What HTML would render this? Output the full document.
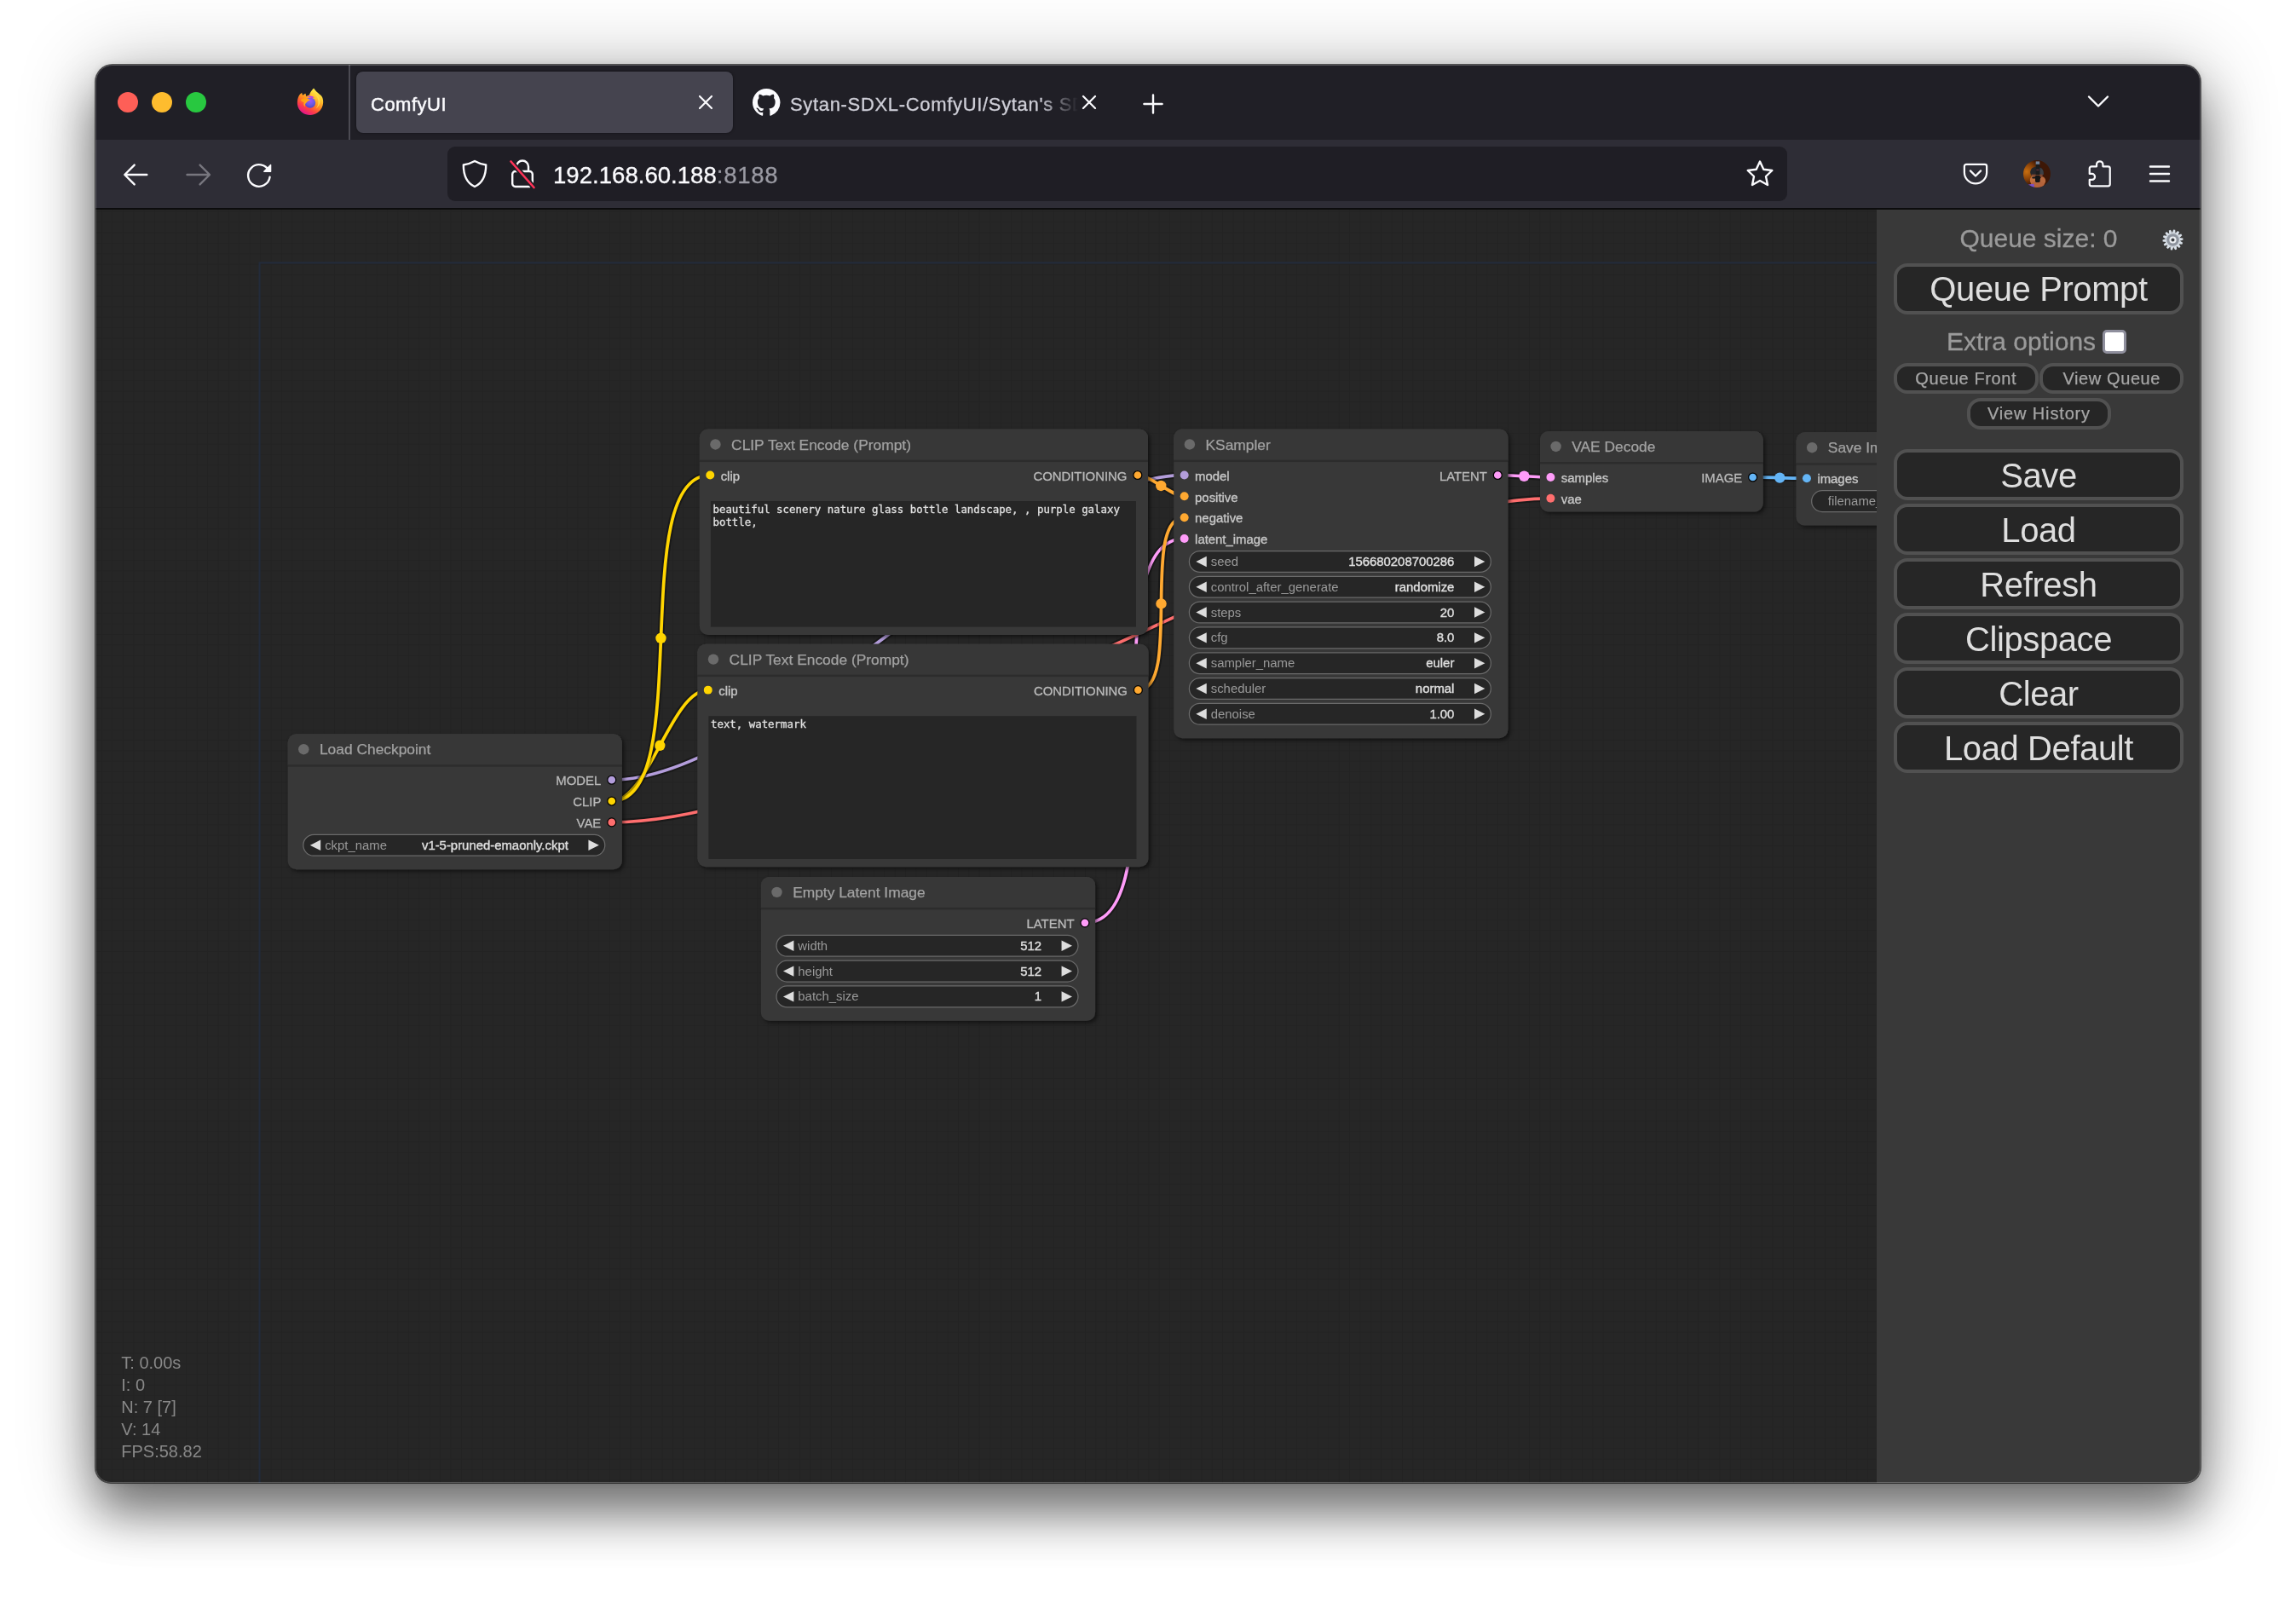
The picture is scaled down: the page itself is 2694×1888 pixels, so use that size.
<!DOCTYPE html>
<html><head><meta charset="utf-8"><title>ComfyUI</title>
<style>
html,body{margin:0;padding:0;overflow:hidden;background:#fff}
body{width:2694px;height:1888px;background:#fff;position:relative;overflow:hidden;font-family:"Liberation Sans",Arial,sans-serif}
#win{position:absolute;left:112px;top:76px;width:2470px;height:1664px;border-radius:20px 20px 18px 18px;overflow:hidden;background:#262626}
#shadow{position:absolute;left:112px;top:76px;width:2470px;height:1664px;border-radius:20px 20px 18px 18px;box-shadow:0 0 0 1px rgba(0,0,0,.6),0 36px 56px rgba(0,0,0,.46),0 6px 90px rgba(0,0,0,.3),0 0 8px rgba(0,0,0,.12)}
#rim{position:absolute;left:0;top:0;width:2470px;height:1664px;box-sizing:border-box;border:1.6px solid rgba(255,255,255,.24);border-radius:20px 20px 18px 18px;pointer-events:none}
#tabs{position:absolute;left:0;top:0;width:100%;height:89px;background:#201f26}
#nav{position:absolute;left:0;top:89px;width:100%;height:80px;background:#2e2d36}
#navline{position:absolute;left:0;top:169px;width:100%;height:2px;background:#0c0c0d}
.abs{position:absolute}
.t{position:absolute;white-space:nowrap;will-change:transform}
.tl{position:absolute;top:33px;width:24px;height:24px;border-radius:50%}
#content{position:absolute;left:0;top:171px;width:2090px;height:1494px;overflow:hidden;background-color:#262626;
 background-image:linear-gradient(to right,#232323 0,#232323 1px,transparent 1px),linear-gradient(to bottom,#232323 0,#232323 1px,transparent 1px);
 background-size:12.42px 12.42px;background-position:7.1px 1.7px}
#side{position:absolute;left:2090px;top:171px;width:380px;height:1494px;background:#393939;color:#999}
.btn{position:absolute;box-sizing:border-box;border:4px solid #515151;border-radius:16px;background:#262626;left:20px;width:340px;height:60px}
.btn span{position:absolute;left:0;top:3.3px;width:100%;text-align:center;color:#dedede;font-size:40px;line-height:46px;letter-spacing:-.4px;white-space:nowrap;will-change:transform}
.sbtn{position:absolute;box-sizing:border-box;border:4px solid #515151;border-radius:16px;background:#262626;height:36.5px}
.sbtn span{position:absolute;left:0;top:2.2px;width:100%;text-align:center;color:#a6a6a6;font-size:20px;line-height:24px;letter-spacing:.6px;white-space:nowrap;will-change:transform;-webkit-text-stroke:.25px #a6a6a6}
svg text{font-family:"Liberation Sans",Arial,sans-serif}
svg text.mono{font-family:"DejaVu Sans Mono","Liberation Mono",monospace}
</style></head><body>
<div id="shadow"></div>
<div id="win">
<div class="abs" style="left:0;top:-1px;width:2470px;height:1665px">
 <div id="tabs">
  <div class="tl" style="left:26px;background:#fe5f57"></div>
  <div class="tl" style="left:66px;background:#febc2e"></div>
  <div class="tl" style="left:106px;background:#28c840"></div>
  <!-- firefox logo -->
  <svg class="abs" style="left:228px;top:21px" width="50" height="50" viewBox="0 0 50 50">
   <defs>
    <linearGradient id="ff1" x1=".82" y1=".08" x2=".3" y2=".98"><stop offset="0" stop-color="#fff44f"/><stop offset=".28" stop-color="#ffc42e"/><stop offset=".52" stop-color="#ff8a1f"/><stop offset=".76" stop-color="#ff3f45"/><stop offset="1" stop-color="#e3158c"/></linearGradient>
    <radialGradient id="ff2" cx=".5" cy=".3" r=".75"><stop offset="0" stop-color="#9f52ff"/><stop offset=".55" stop-color="#6a5ae0"/><stop offset="1" stop-color="#4b3fc0"/></radialGradient>
    <linearGradient id="ff3" x1="0" y1="0" x2="1" y2="1"><stop offset="0" stop-color="#ff9a0a"/><stop offset="1" stop-color="#ffb62a"/></linearGradient>
   </defs>
   <path d="M28.1 7.6C30 10.6 32.5 12.6 35 14.7C37 16.2 38.3 17.6 38.6 19.6C39.6 22.5 39.4 27 37.6 30.6C35 35.6 30 39 24 39C17 39 11.5 35 9.5 29C8.4 25 8.8 21 10 18C11 15.5 12.5 13.8 14.3 12.7C14.3 14 14.8 15 15.5 15.8C16.3 14.8 17.5 14.1 18.6 13.8C18.6 15 19 16.2 19.6 17.2C20.6 16.5 22 15.8 23 15.6C23.6 12.6 25.5 10.4 28.1 7.6Z" fill="url(#ff1)"/>
   <path d="M28.3 14C31.5 16 33.6 19.5 33.6 23.8C33.6 27 32.5 29.6 30.6 31.4C33.8 29.4 35.6 26 35.4 22.4C35.2 19 32.6 15.6 28.3 14Z" fill="#ffe14d" opacity=".8"/>
   <circle cx="24" cy="24.6" r="6.2" fill="url(#ff2)"/>
   <path d="M20 17.4C22.5 15.8 26.5 16.2 29 18.6C27.6 18.3 26.6 18.5 26 19.2C24.4 17.8 22 17.3 20 17.4Z" fill="#b536f0"/>
   <path d="M12.8 21.2C15 19.6 18 19 20 19.6C21.5 20 22.8 20.8 24 21.4C22 22 20.2 23.2 19.4 24.6C18 26 17.4 27.6 17.8 29.4C16 27.6 16.2 25.4 16.8 24C15 23.6 13.6 22.6 12.8 21.2Z" fill="url(#ff3)"/>
  </svg>
  <div class="abs" style="left:297px;top:1px;width:1.5px;height:88px;background:#4b4a52"></div>
  <div class="abs" style="left:306px;top:9px;width:442px;height:72px;border-radius:8px;background:#45444f;box-shadow:0 0 3px rgba(0,0,0,.5)"></div>
  <div class="t" style="left:322.5px;top:35px;font-size:22px;line-height:26px;color:#fbfbfe;letter-spacing:.5px;-webkit-text-stroke:.45px #fbfbfe">ComfyUI</div>
  <svg class="abs" style="left:706px;top:35px" width="20" height="20" viewBox="0 0 20 20"><path d="M3 3L17 17M17 3L3 17" stroke="#fbfbfe" stroke-width="2.2" stroke-linecap="round"/></svg>
  <svg class="abs" style="left:771.4px;top:28.6px" width="32.5" height="32.5" viewBox="0 0 16 16"><path d="M8 0C3.58 0 0 3.58 0 8c0 3.54 2.29 6.53 5.47 7.59.4.07.55-.17.55-.38 0-.19-.01-.82-.01-1.49-2.01.37-2.53-.49-2.69-.94-.09-.23-.48-.94-.82-1.13-.28-.15-.68-.52-.01-.53.63-.01 1.08.58 1.23.82.72 1.21 1.87.87 2.33.66.07-.52.28-.87.51-1.07-1.78-.2-3.64-.89-3.64-3.95 0-.87.31-1.59.82-2.15-.08-.2-.36-1.02.08-2.12 0 0 .67-.21 2.2.82.64-.18 1.32-.27 2-.27.68 0 1.36.09 2 .27 1.53-1.04 2.2-.82 2.2-.82.44 1.1.16 1.92.08 2.12.51.56.82 1.27.82 2.15 0 3.07-1.87 3.75-3.65 3.95.29.25.54.73.54 1.48 0 1.07-.01 1.93-.01 2.2 0 .21.15.46.55.38A8.013 8.013 0 0016 8c0-4.42-3.58-8-8-8z" fill="#fbfbfe"/></svg>
  <div class="t" style="left:815px;top:35px;width:340px;height:28px;overflow:hidden;font-size:22px;line-height:26px;color:#cfcfd8;letter-spacing:.67px;-webkit-text-stroke:.3px #cfcfd8;-webkit-mask-image:linear-gradient(to right,#000 0,#000 292px,transparent 338px);mask-image:linear-gradient(to right,#000 0,#000 292px,transparent 338px)">Sytan-SDXL-ComfyUI/Sytan's SDXL Workflow</div>
  <svg class="abs" style="left:1155.8px;top:35px" width="20" height="20" viewBox="0 0 20 20"><path d="M3 3L17 17M17 3L3 17" stroke="#fbfbfe" stroke-width="2.2" stroke-linecap="round"/></svg>
  <svg class="abs" style="left:1228px;top:34px" width="26" height="26" viewBox="0 0 26 26"><path d="M13 2.4V23.6M2.4 13H23.6" stroke="#fbfbfe" stroke-width="2.4" stroke-linecap="round"/></svg>
  <svg class="abs" style="left:2336px;top:35px" width="28" height="18" viewBox="0 0 28 18"><path d="M3 3.5L14 14.5L25 3.5" fill="none" stroke="#fbfbfe" stroke-width="2.4" stroke-linecap="round" stroke-linejoin="round"/></svg>
 </div>
 <div id="nav">
  <svg class="abs" style="left:30px;top:25px" width="36" height="32" viewBox="0 0 36 32"><path d="M30.3 16H5M15.7 4.6L4.3 16L15.7 27.4" fill="none" stroke="#fbfbfe" stroke-width="2.4" stroke-linecap="round" stroke-linejoin="round"/></svg>
  <svg class="abs" style="left:102px;top:25px" width="36" height="32" viewBox="0 0 36 32"><path d="M5.5 16H31M20.6 4.6L32 16L20.6 27.4" fill="none" stroke="#77767e" stroke-width="2.4" stroke-linecap="round" stroke-linejoin="round"/></svg>
  <svg class="abs" style="left:174px;top:23px" width="36" height="36" viewBox="0 0 36 36"><path d="M29.5 13.5A12.8 12.8 0 1 0 30.6 20.7" fill="none" stroke="#fbfbfe" stroke-width="2.4" stroke-linecap="round"/><path d="M31.6 6.4V14.2H23.8Z" fill="#fbfbfe" stroke="#fbfbfe" stroke-width="1.4" stroke-linejoin="round"/></svg>
  <div class="abs" style="left:413px;top:8px;width:1572px;height:63.5px;border-radius:9px;background:#1f1e25"></div>
  <svg class="abs" style="left:428px;top:22px" width="34" height="36" viewBox="0 0 34 36"><path d="M17 3C12.5 5.5 8 7 3.8 7.5 3.8 19 7 28.5 17 33 27 28.5 30.2 19 30.2 7.5 26 7 21.5 5.5 17 3Z" fill="none" stroke="#fbfbfe" stroke-width="2.4" stroke-linejoin="round"/></svg>
  <svg class="abs" style="left:484px;top:20px" width="34" height="40" viewBox="0 0 34 40"><path d="M10 17V11.5A7 7 0 0 1 24 11.5V17" fill="none" stroke="#fbfbfe" stroke-width="2.4"/><rect x="5.2" y="17" width="23.6" height="18" rx="3.5" fill="none" stroke="#fbfbfe" stroke-width="2.4"/><path d="M3.5 5.5L30.5 36" stroke="#1f1e25" stroke-width="6"/><path d="M3.5 5.5L30.5 36" stroke="#ff3358" stroke-width="2.6" stroke-linecap="round"/></svg>
  <div class="t" style="left:537px;top:25.5px;font-size:27.6px;line-height:32px;color:#fbfbfe;-webkit-text-stroke:.3px #fbfbfe">192.168.60.188<span style="color:#9a9aa3;letter-spacing:.7px;-webkit-text-stroke:.3px #9a9aa3">:8188</span></div>
  <svg class="abs" style="left:1935px;top:22px" width="36" height="36" viewBox="0 0 36 36"><path d="M18 3.5L22.3 12.8L32.3 14L25 21L27 31L18 26L9 31L11 21L3.7 14L13.7 12.8Z" fill="none" stroke="#fbfbfe" stroke-width="2.4" stroke-linejoin="round"/></svg>
  <svg class="abs" style="left:2191px;top:26.5px" width="30" height="26.25" viewBox="0 0 32 28"><path d="M4.5 2H27.5A2.5 2.5 0 0 1 30 4.5V12A14 14 0 0 1 2 12V4.5A2.5 2.5 0 0 1 4.5 2Z" fill="none" stroke="#fbfbfe" stroke-width="2.4"/><path d="M9.5 10L16 16.5L22.5 10" fill="none" stroke="#fbfbfe" stroke-width="2.4" stroke-linecap="round" stroke-linejoin="round"/></svg>
  <!-- avatar -->
  <svg class="abs" style="left:2262px;top:24px" width="32" height="32" viewBox="0 0 32 32">
   <defs><clipPath id="avc"><circle cx="16" cy="16" r="16"/></clipPath><filter id="avb"><feGaussianBlur stdDeviation=".45"/></filter>
   <radialGradient id="avg" cx=".12" cy=".42" r=".5"><stop offset="0" stop-color="#c96f10"/><stop offset=".55" stop-color="#8a4208"/><stop offset="1" stop-color="#3d1706"/></radialGradient></defs>
   <g clip-path="url(#avc)"><rect width="32" height="32" fill="url(#avg)"/>
   <g filter="url(#avb)">
    <ellipse cx="16" cy="14" rx="7.9" ry="6.6" fill="#25262a"/>
    <path d="M19.5 9C22.5 9.5 24 12.5 23.8 17L19.5 17Z" fill="#3d3f45"/>
    <rect x="9.6" y="16.6" width="13" height="3.4" fill="#7d4630"/>
    <rect x="14.7" y="1.4" width="4.5" height="4" fill="#71849c"/>
    <rect x="14.7" y="4.8" width="4.5" height="12.4" fill="#1a1b1f"/>
    <rect x="15.3" y="10.6" width="3.3" height="1.6" fill="#5a3038"/>
    <ellipse cx="11.3" cy="23.4" rx="3.4" ry="4.9" fill="#c0703f"/>
    <ellipse cx="22.6" cy="24.2" rx="3.6" ry="4.6" fill="#b8683c"/>
    <ellipse cx="16.6" cy="28.6" rx="8" ry="3.8" fill="#b4633a"/>
    <rect x="10.3" y="19.6" width="10" height="2" rx=".8" fill="#15161a"/>
    <rect x="14" y="18.1" width="5.7" height="7.9" rx="1.4" fill="#131418"/>
    <path d="M6 28.4L12.6 27.8L13 32L5 32Z" fill="#7a50c8"/>
   </g></g>
  </svg>
  <svg class="abs" style="left:2336.5px;top:22.5px" width="29.5" height="33.2" viewBox="0 0 32 36"><path d="M12 9V6.5A4 4 0 0 1 20 6.5V9H26.5A2.5 2.5 0 0 1 29 11.5V31.5A2.5 2.5 0 0 1 26.5 34H5.5A2.5 2.5 0 0 1 3 31.5V26H6A3.8 3.8 0 0 0 6 18.4H3V11.5A2.5 2.5 0 0 1 5.5 9Z" fill="none" stroke="#fbfbfe" stroke-width="2.4" stroke-linejoin="round"/></svg>
  <svg class="abs" style="left:2408px;top:29px" width="28" height="22" viewBox="0 0 28 22"><path d="M3 2.5H25M3 11H25M3 19.5H25" stroke="#fbfbfe" stroke-width="2.4" stroke-linecap="round"/></svg>
 </div>
 <div id="navline"></div>
 <div id="content">
  <svg class="abs" style="left:0;top:0;will-change:transform" width="2090" height="1494" viewBox="112 246 2090 1494">
   <defs><filter id="sh" x="-10%" y="-10%" width="120%" height="125%"><feDropShadow dx="2.5" dy="2.5" stdDeviation="2" flood-color="#000" flood-opacity=".5"/></filter></defs>
<path d="M304.6 1800V308.3H2300" fill="none" stroke="#232b3a" stroke-width="2.2"/>
<path d="M717.74 915.2C908.04 915.2 1199.37 557.5 1389.67 557.5" fill="none" stroke="rgba(0,0,0,0.32)" stroke-width="7.95"/>
<path d="M717.74 915.2C908.04 915.2 1199.37 557.5 1389.67 557.5" fill="none" stroke="#B39DDB" stroke-width="3.73"/>
<circle cx="1053.7" cy="736.35" r="6.21" fill="#B39DDB"/>
<path d="M1272.92 1082.87C1389.35 1082.87 1273.24 632.02 1389.67 632.02" fill="none" stroke="rgba(0,0,0,0.32)" stroke-width="7.95"/>
<path d="M1272.92 1082.87C1389.35 1082.87 1273.24 632.02 1389.67 632.02" fill="none" stroke="#FF9CF9" stroke-width="3.73"/>
<circle cx="1331.29" cy="857.44" r="6.21" fill="#FF9CF9"/>
<path d="M717.74 964.88C1009.09 964.88 1528.06 584.82 1819.4 584.82" fill="none" stroke="rgba(0,0,0,0.32)" stroke-width="7.95"/>
<path d="M717.74 964.88C1009.09 964.88 1528.06 584.82 1819.4 584.82" fill="none" stroke="#FF6E6E" stroke-width="3.73"/>
<circle cx="1268.57" cy="774.85" r="6.21" fill="#FF6E6E"/>
<path d="M717.74 940.04C760.89 940.04 787.62 809.63 830.77 809.63" fill="none" stroke="rgba(0,0,0,0.32)" stroke-width="7.95"/>
<path d="M717.74 940.04C760.89 940.04 787.62 809.63 830.77 809.63" fill="none" stroke="#FFD500" stroke-width="3.73"/>
<circle cx="774.25" cy="874.83" r="6.21" fill="#FFD500"/>
<path d="M717.74 940.04C817.64 940.04 733.35 557.5 833.25 557.5" fill="none" stroke="rgba(0,0,0,0.32)" stroke-width="7.95"/>
<path d="M717.74 940.04C817.64 940.04 733.35 557.5 833.25 557.5" fill="none" stroke="#FFD500" stroke-width="3.73"/>
<circle cx="775.5" cy="748.77" r="6.21" fill="#FFD500"/>
<path d="M1334.83 557.5C1349.88 557.5 1374.62 582.34 1389.67 582.34" fill="none" stroke="rgba(0,0,0,0.32)" stroke-width="7.95"/>
<path d="M1334.83 557.5C1349.88 557.5 1374.62 582.34 1389.67 582.34" fill="none" stroke="#FFA931" stroke-width="3.73"/>
<circle cx="1362.25" cy="569.92" r="6.21" fill="#FFA931"/>
<path d="M1335.36 809.63C1387.76 809.63 1337.27 607.18 1389.67 607.18" fill="none" stroke="rgba(0,0,0,0.32)" stroke-width="7.95"/>
<path d="M1335.36 809.63C1387.76 809.63 1337.27 607.18 1389.67 607.18" fill="none" stroke="#FFA931" stroke-width="3.73"/>
<circle cx="1362.51" cy="708.4" r="6.21" fill="#FFA931"/>
<path d="M1757.3 557.5C1772.84 557.5 1803.86 559.98 1819.4 559.98" fill="none" stroke="rgba(0,0,0,0.32)" stroke-width="7.95"/>
<path d="M1757.3 557.5C1772.84 557.5 1803.86 559.98 1819.4 559.98" fill="none" stroke="#FF9CF9" stroke-width="3.73"/>
<circle cx="1788.35" cy="558.74" r="6.21" fill="#FF9CF9"/>
<path d="M2056.62 559.98C2072.46 559.98 2104.12 561.23 2119.96 561.23" fill="none" stroke="rgba(0,0,0,0.32)" stroke-width="7.95"/>
<path d="M2056.62 559.98C2072.46 559.98 2104.12 561.23 2119.96 561.23" fill="none" stroke="#64B5F6" stroke-width="3.73"/>
<circle cx="2088.29" cy="560.6" r="6.21" fill="#64B5F6"/>
<g><path d="M828.28 755.68H1337.61A9.94 9.94 0 0 1 1347.54 765.61V1007.31A9.94 9.94 0 0 1 1337.61 1017.25H828.28A9.94 9.94 0 0 1 818.35 1007.31V765.61A9.94 9.94 0 0 1 828.28 755.68Z" fill="#393939" filter="url(#sh)"/><path d="M828.28 755.68H1337.61A9.94 9.94 0 0 1 1347.54 765.61V792.94H818.35V765.61A9.94 9.94 0 0 1 828.28 755.68Z" fill="#373737"/><rect x="818.35" y="791.7" width="529.2" height="2.48" fill="rgba(0,0,0,0.2)"/><circle cx="836.98" cy="773.61" r="6.21" fill="#6a6a6a"/><text x="855.61" y="779.72" font-size="17.39" fill="#a2a2a2" stroke="#a2a2a2" stroke-width=".25">CLIP Text Encode (Prompt)</text><circle cx="830.77" cy="809.63" r="4.97" fill="#FFD500"/><text x="843.19" y="815.84" font-size="14.9" fill="#c6c6c6" stroke="#c6c6c6" stroke-width=".35">clip</text><circle cx="1335.36" cy="809.63" r="4.97" fill="#FFA931" stroke="#000" stroke-width="1.24"/><text x="1322.94" y="815.84" font-size="14.9" fill="#bababa" stroke="#bababa" stroke-width=".3" text-anchor="end">CONDITIONING</text><rect x="831.39" y="840.13" width="502.11" height="167.8" fill="#262626"/><text x="833.99" y="853.73" font-size="12.4" fill="#e0e0e0" stroke="#e0e0e0" stroke-width=".3" class="mono" xml:space="preserve">text, watermark</text></g>
<g><path d="M830.77 503.55H1337.07A9.94 9.94 0 0 1 1347 513.49V734.95A9.94 9.94 0 0 1 1337.07 744.89H830.77A9.94 9.94 0 0 1 820.83 734.95V513.49A9.94 9.94 0 0 1 830.77 503.55Z" fill="#393939" filter="url(#sh)"/><path d="M830.77 503.55H1337.07A9.94 9.94 0 0 1 1347 513.49V540.81H820.83V513.49A9.94 9.94 0 0 1 830.77 503.55Z" fill="#373737"/><rect x="820.83" y="539.57" width="526.17" height="2.48" fill="rgba(0,0,0,0.2)"/><circle cx="839.46" cy="521.48" r="6.21" fill="#6a6a6a"/><text x="858.09" y="527.59" font-size="17.39" fill="#a2a2a2" stroke="#a2a2a2" stroke-width=".25">CLIP Text Encode (Prompt)</text><circle cx="833.25" cy="557.5" r="4.97" fill="#FFD500"/><text x="845.67" y="563.71" font-size="14.9" fill="#c6c6c6" stroke="#c6c6c6" stroke-width=".35">clip</text><circle cx="1334.83" cy="557.5" r="4.97" fill="#FFA931" stroke="#000" stroke-width="1.24"/><text x="1322.41" y="563.71" font-size="14.9" fill="#bababa" stroke="#bababa" stroke-width=".3" text-anchor="end">CONDITIONING</text><rect x="833.87" y="588.01" width="499.09" height="147.57" fill="#262626"/><text x="836.47" y="601.61" font-size="12.4" fill="#e0e0e0" stroke="#e0e0e0" stroke-width=".3" class="mono" xml:space="preserve">beautiful scenery nature glass bottle landscape, , purple galaxy</text><text x="836.47" y="616.81" font-size="12.4" fill="#e0e0e0" stroke="#e0e0e0" stroke-width=".3" class="mono" xml:space="preserve">bottle,</text></g>
<g><path d="M902.8 1028.92H1275.16A9.94 9.94 0 0 1 1285.1 1038.85V1187.89A9.94 9.94 0 0 1 1275.16 1197.83H902.8A9.94 9.94 0 0 1 892.87 1187.89V1038.85A9.94 9.94 0 0 1 902.8 1028.92Z" fill="#393939" filter="url(#sh)"/><path d="M902.8 1028.92H1275.16A9.94 9.94 0 0 1 1285.1 1038.85V1066.18H892.87V1038.85A9.94 9.94 0 0 1 902.8 1028.92Z" fill="#373737"/><rect x="892.87" y="1064.94" width="392.23" height="2.48" fill="rgba(0,0,0,0.2)"/><circle cx="911.5" cy="1046.85" r="6.21" fill="#6a6a6a"/><text x="930.13" y="1052.96" font-size="17.39" fill="#a2a2a2" stroke="#a2a2a2" stroke-width=".25">Empty Latent Image</text><circle cx="1272.92" cy="1082.87" r="4.97" fill="#FF9CF9" stroke="#000" stroke-width="1.24"/><text x="1260.5" y="1089.08" font-size="14.9" fill="#bababa" stroke="#bababa" stroke-width=".3" text-anchor="end">LATENT</text><rect x="911" y="1097.37" width="353.97" height="24.84" rx="12.42" fill="#262626" stroke="#6a6a6a" stroke-width="1.24"/><path d="M931.37 1103.58L918.95 1109.79L931.37 1116Z" fill="#ddd"/><path d="M1245.59 1103.58L1258.01 1109.79L1245.59 1116Z" fill="#ddd"/><text x="936.34" y="1114.76" font-size="14.9" fill="#999">width</text><text x="1222" y="1114.76" font-size="14.9" fill="#e0e0e0" stroke="#e0e0e0" stroke-width=".35" text-anchor="end">512</text><rect x="911" y="1127.18" width="353.97" height="24.84" rx="12.42" fill="#262626" stroke="#6a6a6a" stroke-width="1.24"/><path d="M931.37 1133.39L918.95 1139.6L931.37 1145.81Z" fill="#ddd"/><path d="M1245.59 1133.39L1258.01 1139.6L1245.59 1145.81Z" fill="#ddd"/><text x="936.34" y="1144.57" font-size="14.9" fill="#999">height</text><text x="1222" y="1144.57" font-size="14.9" fill="#e0e0e0" stroke="#e0e0e0" stroke-width=".35" text-anchor="end">512</text><rect x="911" y="1156.99" width="353.97" height="24.84" rx="12.42" fill="#262626" stroke="#6a6a6a" stroke-width="1.24"/><path d="M931.37 1163.2L918.95 1169.41L931.37 1175.62Z" fill="#ddd"/><path d="M1245.59 1163.2L1258.01 1169.41L1245.59 1175.62Z" fill="#ddd"/><text x="936.34" y="1174.37" font-size="14.9" fill="#999">batch_size</text><text x="1222" y="1174.37" font-size="14.9" fill="#e0e0e0" stroke="#e0e0e0" stroke-width=".35" text-anchor="end">1</text></g>
<g><path d="M1387.18 503.55H1759.54A9.94 9.94 0 0 1 1769.48 513.49V856.28A9.94 9.94 0 0 1 1759.54 866.22H1387.18A9.94 9.94 0 0 1 1377.25 856.28V513.49A9.94 9.94 0 0 1 1387.18 503.55Z" fill="#393939" filter="url(#sh)"/><path d="M1387.18 503.55H1759.54A9.94 9.94 0 0 1 1769.48 513.49V540.81H1377.25V513.49A9.94 9.94 0 0 1 1387.18 503.55Z" fill="#373737"/><rect x="1377.25" y="539.57" width="392.23" height="2.48" fill="rgba(0,0,0,0.2)"/><circle cx="1395.88" cy="521.48" r="6.21" fill="#6a6a6a"/><text x="1414.51" y="527.59" font-size="17.39" fill="#a2a2a2" stroke="#a2a2a2" stroke-width=".25">KSampler</text><circle cx="1389.67" cy="557.5" r="4.97" fill="#B39DDB"/><text x="1402.09" y="563.71" font-size="14.9" fill="#c6c6c6" stroke="#c6c6c6" stroke-width=".35">model</text><circle cx="1389.67" cy="582.34" r="4.97" fill="#FFA931"/><text x="1402.09" y="588.55" font-size="14.9" fill="#c6c6c6" stroke="#c6c6c6" stroke-width=".35">positive</text><circle cx="1389.67" cy="607.18" r="4.97" fill="#FFA931"/><text x="1402.09" y="613.39" font-size="14.9" fill="#c6c6c6" stroke="#c6c6c6" stroke-width=".35">negative</text><circle cx="1389.67" cy="632.02" r="4.97" fill="#FF9CF9"/><text x="1402.09" y="638.23" font-size="14.9" fill="#c6c6c6" stroke="#c6c6c6" stroke-width=".35">latent_image</text><circle cx="1757.3" cy="557.5" r="4.97" fill="#FF9CF9" stroke="#000" stroke-width="1.24"/><text x="1744.88" y="563.71" font-size="14.9" fill="#bababa" stroke="#bababa" stroke-width=".3" text-anchor="end">LATENT</text><rect x="1395.38" y="646.52" width="353.97" height="24.84" rx="12.42" fill="#262626" stroke="#6a6a6a" stroke-width="1.24"/><path d="M1415.75 652.73L1403.33 658.94L1415.75 665.15Z" fill="#ddd"/><path d="M1729.97 652.73L1742.39 658.94L1729.97 665.15Z" fill="#ddd"/><text x="1420.72" y="663.91" font-size="14.9" fill="#999">seed</text><text x="1706.38" y="663.91" font-size="14.9" fill="#e0e0e0" stroke="#e0e0e0" stroke-width=".35" text-anchor="end">156680208700286</text><rect x="1395.38" y="676.33" width="353.97" height="24.84" rx="12.42" fill="#262626" stroke="#6a6a6a" stroke-width="1.24"/><path d="M1415.75 682.54L1403.33 688.75L1415.75 694.96Z" fill="#ddd"/><path d="M1729.97 682.54L1742.39 688.75L1729.97 694.96Z" fill="#ddd"/><text x="1420.72" y="693.72" font-size="14.9" fill="#999">control_after_generate</text><text x="1706.38" y="693.72" font-size="14.9" fill="#e0e0e0" stroke="#e0e0e0" stroke-width=".35" text-anchor="end">randomize</text><rect x="1395.38" y="706.14" width="353.97" height="24.84" rx="12.42" fill="#262626" stroke="#6a6a6a" stroke-width="1.24"/><path d="M1415.75 712.35L1403.33 718.56L1415.75 724.77Z" fill="#ddd"/><path d="M1729.97 712.35L1742.39 718.56L1729.97 724.77Z" fill="#ddd"/><text x="1420.72" y="723.53" font-size="14.9" fill="#999">steps</text><text x="1706.38" y="723.53" font-size="14.9" fill="#e0e0e0" stroke="#e0e0e0" stroke-width=".35" text-anchor="end">20</text><rect x="1395.38" y="735.95" width="353.97" height="24.84" rx="12.42" fill="#262626" stroke="#6a6a6a" stroke-width="1.24"/><path d="M1415.75 742.16L1403.33 748.37L1415.75 754.58Z" fill="#ddd"/><path d="M1729.97 742.16L1742.39 748.37L1729.97 754.58Z" fill="#ddd"/><text x="1420.72" y="753.34" font-size="14.9" fill="#999">cfg</text><text x="1706.38" y="753.34" font-size="14.9" fill="#e0e0e0" stroke="#e0e0e0" stroke-width=".35" text-anchor="end">8.0</text><rect x="1395.38" y="765.76" width="353.97" height="24.84" rx="12.42" fill="#262626" stroke="#6a6a6a" stroke-width="1.24"/><path d="M1415.75 771.97L1403.33 778.18L1415.75 784.39Z" fill="#ddd"/><path d="M1729.97 771.97L1742.39 778.18L1729.97 784.39Z" fill="#ddd"/><text x="1420.72" y="783.14" font-size="14.9" fill="#999">sampler_name</text><text x="1706.38" y="783.14" font-size="14.9" fill="#e0e0e0" stroke="#e0e0e0" stroke-width=".35" text-anchor="end">euler</text><rect x="1395.38" y="795.56" width="353.97" height="24.84" rx="12.42" fill="#262626" stroke="#6a6a6a" stroke-width="1.24"/><path d="M1415.75 801.77L1403.33 807.98L1415.75 814.19Z" fill="#ddd"/><path d="M1729.97 801.77L1742.39 807.98L1729.97 814.19Z" fill="#ddd"/><text x="1420.72" y="812.95" font-size="14.9" fill="#999">scheduler</text><text x="1706.38" y="812.95" font-size="14.9" fill="#e0e0e0" stroke="#e0e0e0" stroke-width=".35" text-anchor="end">normal</text><rect x="1395.38" y="825.37" width="353.97" height="24.84" rx="12.42" fill="#262626" stroke="#6a6a6a" stroke-width="1.24"/><path d="M1415.75 831.58L1403.33 837.79L1415.75 844Z" fill="#ddd"/><path d="M1729.97 831.58L1742.39 837.79L1729.97 844Z" fill="#ddd"/><text x="1420.72" y="842.76" font-size="14.9" fill="#999">denoise</text><text x="1706.38" y="842.76" font-size="14.9" fill="#e0e0e0" stroke="#e0e0e0" stroke-width=".35" text-anchor="end">1.00</text></g>
<g><path d="M1816.91 506.04H2058.86A9.94 9.94 0 0 1 2068.8 515.97V590.49A9.94 9.94 0 0 1 2058.86 600.43H1816.91A9.94 9.94 0 0 1 1806.98 590.49V515.97A9.94 9.94 0 0 1 1816.91 506.04Z" fill="#393939" filter="url(#sh)"/><path d="M1816.91 506.04H2058.86A9.94 9.94 0 0 1 2068.8 515.97V543.3H1806.98V515.97A9.94 9.94 0 0 1 1816.91 506.04Z" fill="#373737"/><rect x="1806.98" y="542.05" width="261.82" height="2.48" fill="rgba(0,0,0,0.2)"/><circle cx="1825.61" cy="523.97" r="6.21" fill="#6a6a6a"/><text x="1844.24" y="530.08" font-size="17.39" fill="#a2a2a2" stroke="#a2a2a2" stroke-width=".25">VAE Decode</text><circle cx="1819.4" cy="559.98" r="4.97" fill="#FF9CF9"/><text x="1831.82" y="566.19" font-size="14.9" fill="#c6c6c6" stroke="#c6c6c6" stroke-width=".35">samples</text><circle cx="1819.4" cy="584.82" r="4.97" fill="#FF6E6E"/><text x="1831.82" y="591.03" font-size="14.9" fill="#c6c6c6" stroke="#c6c6c6" stroke-width=".35">vae</text><circle cx="2056.62" cy="559.98" r="4.97" fill="#64B5F6" stroke="#000" stroke-width="1.24"/><text x="2044.2" y="566.19" font-size="14.9" fill="#bababa" stroke="#bababa" stroke-width=".3" text-anchor="end">IMAGE</text></g>
<g><path d="M2117.48 507.28H2359.43A9.94 9.94 0 0 1 2369.36 517.21V606.64A9.94 9.94 0 0 1 2359.43 616.57H2117.48A9.94 9.94 0 0 1 2107.54 606.64V517.21A9.94 9.94 0 0 1 2117.48 507.28Z" fill="#393939" filter="url(#sh)"/><path d="M2117.48 507.28H2359.43A9.94 9.94 0 0 1 2369.36 517.21V544.54H2107.54V517.21A9.94 9.94 0 0 1 2117.48 507.28Z" fill="#373737"/><rect x="2107.54" y="543.3" width="261.82" height="2.48" fill="rgba(0,0,0,0.2)"/><circle cx="2126.17" cy="525.21" r="6.21" fill="#6a6a6a"/><text x="2144.8" y="531.32" font-size="17.39" fill="#a2a2a2" stroke="#a2a2a2" stroke-width=".25">Save Image</text><circle cx="2119.96" cy="561.23" r="4.97" fill="#64B5F6"/><text x="2132.38" y="567.44" font-size="14.9" fill="#c6c6c6" stroke="#c6c6c6" stroke-width=".35">images</text><rect x="2125.67" y="575.73" width="223.56" height="24.84" rx="12.42" fill="#262626" stroke="#6a6a6a" stroke-width="1.24"/><text x="2144.8" y="593.12" font-size="14.9" fill="#999">filename_prefix</text><text x="2331.1" y="593.12" font-size="14.9" fill="#e0e0e0" stroke="#e0e0e0" stroke-width=".35" text-anchor="end">ComfyUI</text></g>
<g><path d="M347.63 861.25H719.99A9.94 9.94 0 0 1 729.92 871.18V1010.29A9.94 9.94 0 0 1 719.99 1020.22H347.63A9.94 9.94 0 0 1 337.69 1010.29V871.18A9.94 9.94 0 0 1 347.63 861.25Z" fill="#393939" filter="url(#sh)"/><path d="M347.63 861.25H719.99A9.94 9.94 0 0 1 729.92 871.18V898.51H337.69V871.18A9.94 9.94 0 0 1 347.63 861.25Z" fill="#373737"/><rect x="337.69" y="897.27" width="392.23" height="2.48" fill="rgba(0,0,0,0.2)"/><circle cx="356.32" cy="879.18" r="6.21" fill="#6a6a6a"/><text x="374.95" y="885.29" font-size="17.39" fill="#a2a2a2" stroke="#a2a2a2" stroke-width=".25">Load Checkpoint</text><circle cx="717.74" cy="915.2" r="4.97" fill="#B39DDB" stroke="#000" stroke-width="1.24"/><text x="705.32" y="921.41" font-size="14.9" fill="#bababa" stroke="#bababa" stroke-width=".3" text-anchor="end">MODEL</text><circle cx="717.74" cy="940.04" r="4.97" fill="#FFD500" stroke="#000" stroke-width="1.24"/><text x="705.32" y="946.25" font-size="14.9" fill="#bababa" stroke="#bababa" stroke-width=".3" text-anchor="end">CLIP</text><circle cx="717.74" cy="964.88" r="4.97" fill="#FF6E6E" stroke="#000" stroke-width="1.24"/><text x="705.32" y="971.09" font-size="14.9" fill="#bababa" stroke="#bababa" stroke-width=".3" text-anchor="end">VAE</text><rect x="355.82" y="979.38" width="353.97" height="24.84" rx="12.42" fill="#262626" stroke="#6a6a6a" stroke-width="1.24"/><path d="M376.19 985.59L363.77 991.8L376.19 998.01Z" fill="#ddd"/><path d="M690.42 985.59L702.84 991.8L690.42 998.01Z" fill="#ddd"/><text x="381.16" y="996.77" font-size="14.9" fill="#999">ckpt_name</text><text x="666.82" y="996.77" font-size="14.9" fill="#e0e0e0" stroke="#e0e0e0" stroke-width=".35" text-anchor="end">v1-5-pruned-emaonly.ckpt</text></g>
<text x="142.3" y="1605.8" font-size="20" fill="#888">T: 0.00s</text>
<text x="142.3" y="1631.8" font-size="20" fill="#888">I: 0</text>
<text x="142.3" y="1657.8" font-size="20" fill="#888">N: 7 [7]</text>
<text x="142.3" y="1683.8" font-size="20" fill="#888">V: 14</text>
<text x="142.3" y="1709.8" font-size="20" fill="#888">FPS:58.82</text>
  </svg>
 </div>
 <div id="side">
  <div class="t" style="left:0;top:15.5px;width:380px;text-align:center;font-size:30px;line-height:36px;color:#9a9a9a;-webkit-text-stroke:.3px #9a9a9a">Queue size: 0</div>
  <svg class="abs" style="left:334.7px;top:22.5px" width="25" height="25" viewBox="-12.5 -12.5 25 25"><g fill="#d9e0e8"><path d="M-1.9 -8L-1.1 -12H1.1L1.9 -8Z" transform="rotate(8.0)"/><path d="M-1.9 -8L-1.1 -12H1.1L1.9 -8Z" transform="rotate(33.7)"/><path d="M-1.9 -8L-1.1 -12H1.1L1.9 -8Z" transform="rotate(59.4)"/><path d="M-1.9 -8L-1.1 -12H1.1L1.9 -8Z" transform="rotate(85.1)"/><path d="M-1.9 -8L-1.1 -12H1.1L1.9 -8Z" transform="rotate(110.9)"/><path d="M-1.9 -8L-1.1 -12H1.1L1.9 -8Z" transform="rotate(136.6)"/><path d="M-1.9 -8L-1.1 -12H1.1L1.9 -8Z" transform="rotate(162.3)"/><path d="M-1.9 -8L-1.1 -12H1.1L1.9 -8Z" transform="rotate(188.0)"/><path d="M-1.9 -8L-1.1 -12H1.1L1.9 -8Z" transform="rotate(213.7)"/><path d="M-1.9 -8L-1.1 -12H1.1L1.9 -8Z" transform="rotate(239.4)"/><path d="M-1.9 -8L-1.1 -12H1.1L1.9 -8Z" transform="rotate(265.1)"/><path d="M-1.9 -8L-1.1 -12H1.1L1.9 -8Z" transform="rotate(290.9)"/><path d="M-1.9 -8L-1.1 -12H1.1L1.9 -8Z" transform="rotate(316.6)"/><path d="M-1.9 -8L-1.1 -12H1.1L1.9 -8Z" transform="rotate(342.3)"/><circle r="8.6"/></g><circle r="7.3" fill="#8e949e"/><circle r="4.1" fill="#eceff3"/><circle r="2" fill="#3c3f43"/></svg>
  <div class="btn" style="top:63px"><span>Queue Prompt</span></div>
  <div class="t" style="left:82px;top:136.7px;font-size:30px;line-height:36px;color:#9a9a9a;-webkit-text-stroke:.3px #9a9a9a">Extra options</div>
  <div class="abs" style="left:265px;top:141px;width:28px;height:28px;box-sizing:border-box;border:3.5px solid #8f8f9d;border-radius:5px;background:#fff"></div>
  <div class="sbtn" style="left:20px;top:179.5px;width:169.5px"><span>Queue Front</span></div>
  <div class="sbtn" style="left:190.5px;top:179.5px;width:169.5px"><span>View Queue</span></div>
  <div class="sbtn" style="left:105.5px;top:221px;width:169px"><span style="letter-spacing:.85px">View History</span></div>
  <div class="btn" style="top:281.3px"><span>Save</span></div>
  <div class="btn" style="top:345.3px"><span>Load</span></div>
  <div class="btn" style="top:409.3px"><span>Refresh</span></div>
  <div class="btn" style="top:473.3px"><span>Clipspace</span></div>
  <div class="btn" style="top:537.3px"><span>Clear</span></div>
  <div class="btn" style="top:601.3px"><span>Load Default</span></div>
 </div>
 </div>
 <div id="rim"></div>
</div>
</body></html>
